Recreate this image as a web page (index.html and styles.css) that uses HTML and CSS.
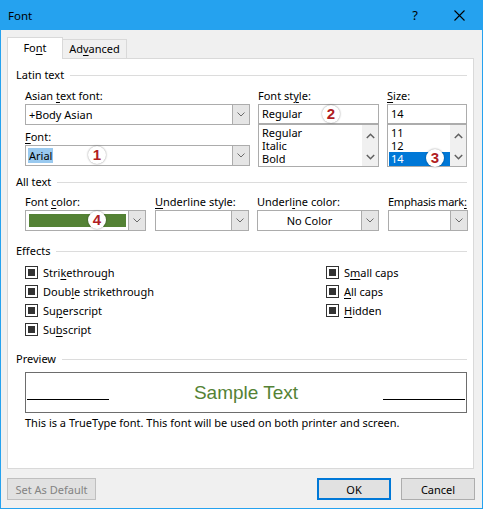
FILE: index.html
```html
<!DOCTYPE html>
<html lang="en">
<head>
    <meta charset="UTF-8">
    <title>Font</title>
    <link rel="stylesheet" href="styles.css">
</head>
<body>
<div class="window">
    <div class="titlebar">
        <span class="title">Font</span>
        <span class="help">?</span>
        <span class="close">
            <svg width="11" height="11" viewBox="0 0 11 11"><path d="M0.5 0.5L10.5 10.5M10.5 0.5L0.5 10.5" stroke="#000" stroke-width="1.1" fill="none"/></svg>
        </span>
    </div>
    <div class="dialog">
        <div class="tabs">
            <div class="tab active">Fo<u>n</u>t</div>
            <div class="tab">Ad<u>v</u>anced</div>
        </div>
        <div class="panel">
            <!-- Latin text -->
            <div class="group-title"><span>Latin text</span></div>
            <div class="latin">
                <div class="col">
                    <div class="label">Asian <u>t</u>ext font:</div>
                    <div class="combo">
                        <span class="value">+Body Asian</span>
                        <span class="drop"><svg width="8" height="5" viewBox="0 0 8 5"><path d="M0.5 0.5L4 4L7.5 0.5" fill="none" stroke="#6a6a6a"/></svg></span>
                    </div>
                    <div class="label second"><u>F</u>ont:</div>
                    <div class="combo">
                        <span class="value"><span class="sel">Arial</span></span>
                        <span class="drop"><svg width="8" height="5" viewBox="0 0 8 5"><path d="M0.5 0.5L4 4L7.5 0.5" fill="none" stroke="#6a6a6a"/></svg></span>
                        <span class="badge b1">1</span>
                    </div>
                </div>
                <div class="col">
                    <div class="label">Font st<u>y</u>le:</div>
                    <div class="textbox">Regular<span class="badge b2">2</span></div>
                    <div class="list">
                        <div class="items">
                            <div class="item">Regular</div>
                            <div class="item">Italic</div>
                            <div class="item">Bold</div>
                        </div>
                        <div class="scroll">
                            <svg width="9" height="6" viewBox="0 0 9 6"><path d="M0.8 5L4.5 1.3L8.2 5" fill="none" stroke="#606060" stroke-width="1.5"/></svg>
                            <svg width="9" height="6" viewBox="0 0 9 6"><path d="M0.8 1L4.5 4.7L8.2 1" fill="none" stroke="#606060" stroke-width="1.5"/></svg>
                        </div>
                    </div>
                </div>
                <div class="col">
                    <div class="label"><u>S</u>ize:</div>
                    <div class="textbox">14</div>
                    <div class="list">
                        <div class="items">
                            <div class="item">11</div>
                            <div class="item">12</div>
                            <div class="item selected">14</div>
                        </div>
                        <div class="scroll">
                            <svg width="9" height="6" viewBox="0 0 9 6"><path d="M0.8 5L4.5 1.3L8.2 5" fill="none" stroke="#606060" stroke-width="1.5"/></svg>
                            <svg width="9" height="6" viewBox="0 0 9 6"><path d="M0.8 1L4.5 4.7L8.2 1" fill="none" stroke="#606060" stroke-width="1.5"/></svg>
                        </div>
                        <span class="badge b3">3</span>
                    </div>
                </div>
            </div>

            <!-- All text -->
            <div class="group-title gap"><span>All text</span></div>
            <div class="alltext">
                <div class="label">Font <u>c</u>olor:</div>
                <div class="label"><u>U</u>nderline style:</div>
                <div class="label">Underl<u>i</u>ne color:</div>
                <div class="label tight">Emphasis mark<u>:</u></div>
                <div class="combo">
                    <span class="value"><span class="swatch"></span></span>
                    <span class="drop"><svg width="8" height="5" viewBox="0 0 8 5"><path d="M0.5 0.5L4 4L7.5 0.5" fill="none" stroke="#6a6a6a"/></svg></span>
                    <span class="badge b4">4</span>
                </div>
                <div class="combo">
                    <span class="value"></span>
                    <span class="drop"><svg width="8" height="5" viewBox="0 0 8 5"><path d="M0.5 0.5L4 4L7.5 0.5" fill="none" stroke="#6a6a6a"/></svg></span>
                </div>
                <div class="combo">
                    <span class="value center">No Color</span>
                    <span class="drop"><svg width="8" height="5" viewBox="0 0 8 5"><path d="M0.5 0.5L4 4L7.5 0.5" fill="none" stroke="#6a6a6a"/></svg></span>
                </div>
                <div class="combo">
                    <span class="value"></span>
                    <span class="drop"><svg width="8" height="5" viewBox="0 0 8 5"><path d="M0.5 0.5L4 4L7.5 0.5" fill="none" stroke="#6a6a6a"/></svg></span>
                </div>
            </div>

            <!-- Effects -->
            <div class="group-title gap2"><span>Effects</span></div>
            <div class="effects">
                <div class="check"><span class="box"></span><span>Stri<u>k</u>ethrough</span></div>
                <div class="check"><span class="box"></span><span>S<u>m</u>all caps</span></div>
                <div class="check"><span class="box"></span><span>Doub<u>l</u>e strikethrough</span></div>
                <div class="check"><span class="box"></span><span><u>A</u>ll caps</span></div>
                <div class="check"><span class="box"></span><span>Su<u>p</u>erscript</span></div>
                <div class="check"><span class="box"></span><span><u>H</u>idden</span></div>
                <div class="check"><span class="box"></span><span>Su<u>b</u>script</span></div>
            </div>

            <!-- Preview -->
            <div class="group-title gap2"><span>Preview</span></div>
            <div class="preview-wrap">
                <div class="preview">
                    <span class="rule"></span>
                    <span class="sample">Sample Text</span>
                    <span class="rule"></span>
                </div>
                <div class="note">This is a TrueType font. This font will be used on both printer and screen.</div>
            </div>
        </div>

        <div class="buttons">
            <button class="btn disabled">Set As Default</button>
            <span class="spacer"></span>
            <button class="btn default">OK</button>
            <button class="btn">Cancel</button>
        </div>
    </div>
</div>
</body>
</html>
```

FILE: styles.css
```css
* { box-sizing: border-box; }
body {
    margin: 0;
    font-family: "Noto Sans", "Open Sans", sans-serif;
    font-size: 11px;
    color: #000;
    background: #f0f0f0;
}
u { text-decoration-thickness: 1px; text-underline-offset: 2px; }

.window {
    width: 483px;
    height: 509px;
    border: 1px solid #25a2ef;
    border-top: none;
    background: #f0f0f0;
}
.titlebar {
    height: 30px;
    background: #25a2ef;
    display: flex;
    align-items: center;
    padding-left: 8px;
    margin: 0 -1px;
}
.titlebar .title { font-size: 11.5px; flex: 1; padding-top: 1px; }
.titlebar .help { font-size: 13px; width: 46px; text-align: center; margin-right: -2px; }
.titlebar .close { width: 46px; display: flex; justify-content: center; margin-right: 1px; }

.dialog { padding: 7px 0 0 6px; }

/* tabs */
.tabs {
    display: flex;
    align-items: flex-end;
    height: 21px;
}
.tab {
    height: 19px;
    width: 64px;
    border: 1px solid #d9d9d9;
    border-left: none;
    border-bottom: none;
    text-align: center;
    line-height: 17px;
    background: #f0f0f0;
}
.tab.active {
    width: 56px;
    height: 22px;
    border-left: 1px solid #d9d9d9;
    background: #fff;
    margin-bottom: -1px;
    position: relative;
    z-index: 1;
    line-height: 20px;
}

.panel {
    width: 467px;
    height: 411px;
    background: #fff;
    border: 1px solid #d9d9d9;
    padding-top: 9px;
}

/* group header with rule */
.group-title {
    display: flex;
    align-items: center;
    gap: 6px;
    padding: 0 6px 0 8px;
    height: 14px;
    line-height: 14px;
}
.group-title::after {
    content: "";
    flex: 1;
    border-top: 1px solid #dcdcdc;
    margin-top: 1px;
}
.group-title.gap { margin-top: 8px; }
.group-title.gap2 { margin-top: 13px; }

.label { height: 16px; line-height: 16px; white-space: nowrap; }
.label.second { margin-top: 4px; }
.label.tight { letter-spacing: -0.25px; }

.latin {
    display: grid;
    grid-template-columns: 225px 121px 80px;
    column-gap: 8px;
    margin: 6px 6px 0 17px;
}

.combo {
    position: relative;
    height: 21px;
    border: 1px solid #acacac;
    background: #fff;
    display: flex;
}
.combo .value {
    flex: 1;
    padding-left: 3px;
    line-height: 19px;
    display: flex;
    align-items: center;
}
.combo .value.center { justify-content: center; padding-left: 0; }
.combo .drop {
    width: 17px;
    background: #e5e5e5;
    border-left: 1px solid #acacac;
    display: flex;
    align-items: center;
    justify-content: center;
}
.sel { background: #99c9ef; padding: 0 1px; line-height: 15px; margin-left: -1px; }
.swatch {
    display: block;
    width: 97px;
    height: 13px;
    background: #548235;
}

.textbox {
    position: relative;
    height: 20px;
    border: 1px solid #acacac;
    line-height: 18px;
    padding-left: 3px;
    background: #fff;
}
.list {
    position: relative;
    height: 43px;
    border: 1px solid #acacac;
    display: flex;
    background: #fff;
}
.list .items { flex: 1; padding: 1px 0 0 1px; }
.list .item { height: 13px; line-height: 13px; padding-left: 2px; }
.list .item.selected { background: #0078d7; color: #fff; height: 14px; }
.list .scroll {
    width: 16px;
    background: #f0f0f0;
    display: flex;
    flex-direction: column;
    align-items: center;
    justify-content: space-between;
    padding: 8px 0 6px;
}

.alltext {
    display: grid;
    grid-template-columns: 121px 94px 121px 80px;
    column-gap: 9px;
    margin: 5px 6px 0 17px;
}
.alltext .label:nth-child(3) { margin-left: -1px; }
.alltext .combo:nth-child(7) { margin-left: -1px; }

.effects {
    display: grid;
    grid-template-columns: 301px 1fr;
    grid-auto-rows: 19px;
    margin: 5px 6px 0 17px;
}
.check { display: flex; align-items: center; gap: 5px; white-space: nowrap; }
.check .box {
    width: 13px;
    height: 13px;
    border: 1px solid #333;
    padding: 2px;
    background: #fff;
}
.check .box::before {
    content: "";
    display: block;
    width: 7px;
    height: 7px;
    background: #333;
}

.preview-wrap { margin: 6px 6px 0 17px; }
.preview {
    height: 41px;
    border: 1px solid #6d6d6d;
    display: flex;
    align-items: flex-start;
    padding: 0 1px;
}
.preview .rule {
    width: 82px;
    height: 1px;
    background: #000;
    margin-top: 26px;
}
.preview .sample {
    flex: 1;
    text-align: center;
    font-family: "Liberation Sans", Arial, sans-serif;
    font-size: 19px;
    line-height: 22px;
    color: #548235;
    margin-top: 9px;
}
.note { margin-top: 2px; line-height: 16px; white-space: nowrap; }

/* bottom buttons */
.buttons {
    display: flex;
    margin-top: 9px;
    padding-right: 7px;
}
.buttons .spacer { flex: 1; }
.btn {
    font: inherit;
    height: 22px;
    background: #e1e1e1;
    border: 1px solid #adadad;
    color: #000;
    padding: 0;
    width: 74px;
    margin-left: 10px;
}
.btn.disabled {
    width: 89px;
    margin-left: 0;
    background: #e1e1e1;
    border-color: #bfbfbf;
    color: #838383;
}
.btn.default { border: 2px solid #0078d7; }

/* numbered markers */
.badge {
    position: absolute;
    width: 18px;
    height: 18px;
    border-radius: 50%;
    background: #fff;
    box-shadow: 0 0 2px rgba(0, 0, 0, 0.45);
    color: #b01c22;
    font-family: "Liberation Sans", Arial, sans-serif;
    font-weight: bold;
    font-size: 15px;
    line-height: 18px;
    text-align: center;
}
.b1 { left: 62px; top: 0px; }
.b2 { left: 63px; top: 0px; }
.b3 { left: 38px; top: 24px; }
.b4 { left: 62px; top: 0px; }
```
